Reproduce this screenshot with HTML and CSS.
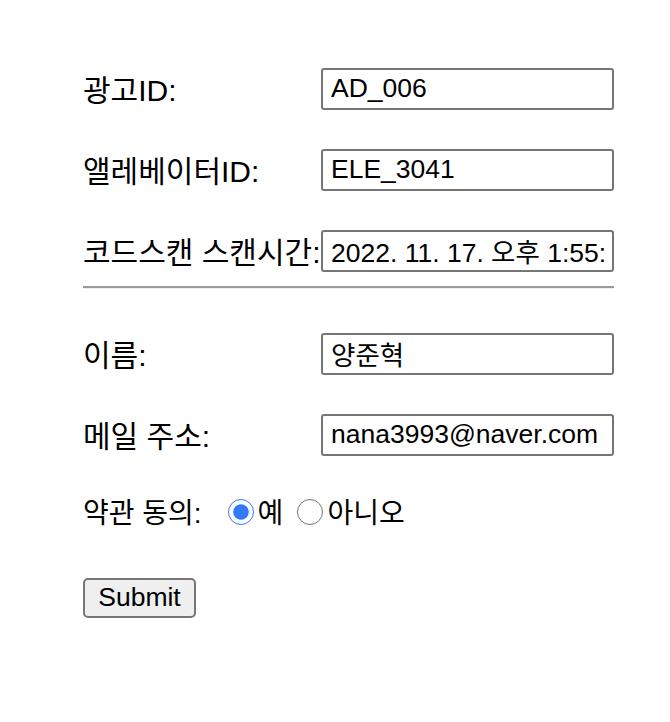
FILE: index.html
```html
<!DOCTYPE html>
<html lang="ko">
<head>
    <meta charset="UTF-8">
    <meta name="viewport" content="width=device-width, initial-scale=1.0">
    <title>광고 등록</title>
    <link rel="stylesheet" href="styles.css">
</head>
<body>
    <form class="ad_form">
        <div class="row">
            <label for="adId">광고ID:</label>
            <input type="text" id="adId" value="AD_006">
        </div>
        <div class="row">
            <label for="eleId">앨레베이터ID:</label>
            <input type="text" id="eleId" value="ELE_3041">
        </div>
        <div class="row">
            <label for="scanTime">코드스캔 스캔시간:</label>
            <input type="text" id="scanTime" value="2022. 11. 17. 오후 1:55:32">
        </div>
        <hr>
        <div class="row">
            <label for="name">이름:</label>
            <input type="text" id="name" value="양준혁">
        </div>
        <div class="row">
            <label for="email">메일 주소:</label>
            <input type="text" id="email" value="nana3993@naver.com">
        </div>
        <div class="row radio_row">
            <span class="agree">약관 동의:</span>
            <input type="radio" name="agree" id="yes" checked>
            <label for="yes" class="opt">예</label>
            <input type="radio" name="agree" id="no">
            <label for="no" class="opt">아니오</label>
        </div>
        <div class="btn_row">
            <input type="button" value="Submit">
        </div>
    </form>
</body>
</html>
```

FILE: styles.css
```css
* {
  font-family: "Liberation Sans", Arial, "Noto Sans CJK KR", sans-serif;
}
body {
  margin: 0;
  background: #fff;
  color: #000;
}
.ad_form {
  width: 531px;
  padding: 68px 0 0 83px;
}
.row {
  display: flex;
  align-items: center;
  height: 42px;
  margin-bottom: 39px;
  font-size: 30px;
}
.row label {
  width: 238px;
  flex-shrink: 0;
  white-space: nowrap;
  margin-top: -3px;
}
.row input[type="text"] {
  box-sizing: border-box;
  width: 293px;
  height: 42px;
  margin: 0;
  padding: 0 7px 2px 8px;
  font-size: 26.5px;
  color: #000;
  border: 2px solid #767676;
  border-radius: 3px;
}
hr {
  margin: -25px 0 44px;
  border: none;
  border-top: 2px solid #9a9a9a;
  border-bottom: 1px solid #eee;
}
.radio_row {
  margin-top: -4px;
  margin-bottom: 45px;
  font-size: 28px;
}
.agree {
  margin-right: 26px;
  margin-top: -3px;
}
.radio_row input[type="radio"] {
  width: 26px;
  height: 26px;
  margin: 0 4px 0 0;
  accent-color: #2f7cf6;
}
.radio_row label.opt {
  width: auto;
  margin-right: 14px;
}
.btn_row input {
  box-sizing: border-box;
  width: 113px;
  height: 40px;
  margin: 0;
  padding: 0 0 2px;
  font-size: 26.5px;
  background: #efefef;
  border: 2px solid #767676;
  border-radius: 5px;
  color: #000;
}
```
